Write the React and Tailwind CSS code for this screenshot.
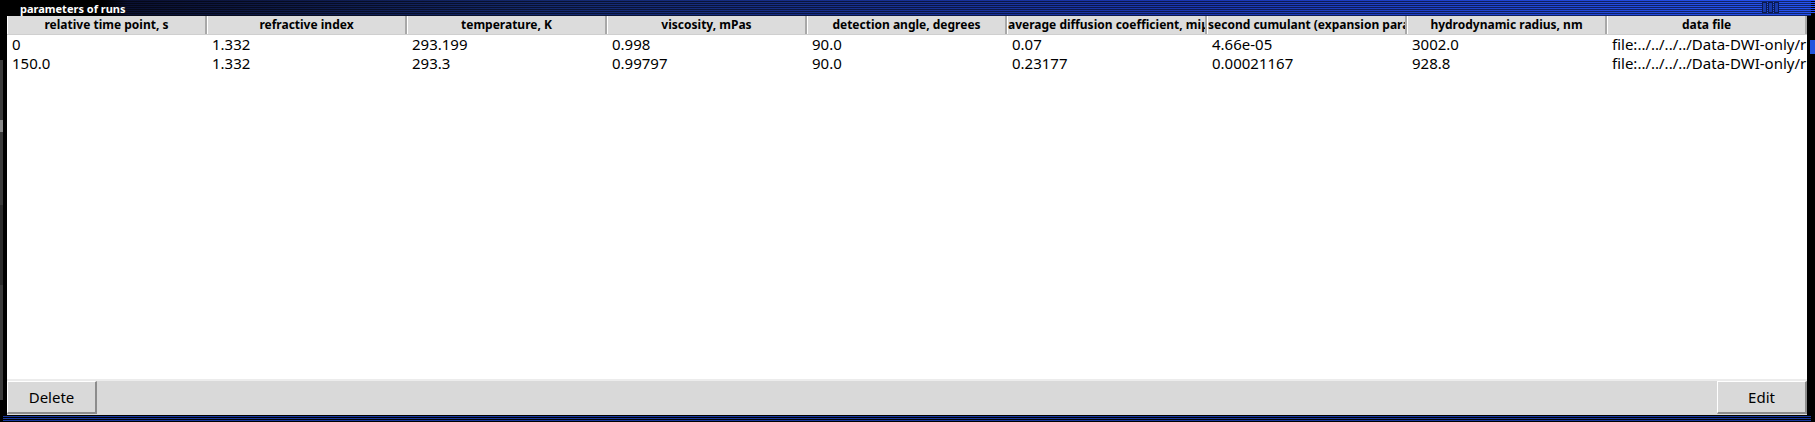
import React from "react";

const headers = [
  "relative time point, s",
  "refractive index",
  "temperature, K",
  "viscosity, mPas",
  "detection angle, degrees",
  "average diffusion coefficient, mi\u00b5m\u00b2/s",
  "second cumulant (expansion parameter)",
  "hydrodynamic radius, nm",
  "data file",
];

const rows = [
  ["0", "1.332", "293.199", "0.998", "90.0", "0.07", "4.66e-05", "3002.0", "file:../../../../Data-DWI-only/run1.dat"],
  ["150.0", "1.332", "293.3", "0.99797", "90.0", "0.23177", "0.00021167", "928.8", "file:../../../../Data-DWI-only/run2.dat"],
];

export default function App() {
  return (
    <div className="w-[1815px] h-[422px] bg-black overflow-hidden relative font-['Noto_Sans',sans-serif]">
      <div className="absolute left-0 top-[60px] w-[3px] h-[340px] bg-[#3a3a3a]" />
      <div className="absolute left-0 top-[120px] w-[3px] h-[12px] bg-[#888]" />
      <div className="absolute left-0 top-[205px] w-[3px] h-[80px] bg-[#2a2a2a]" />
      <div className="absolute right-0 top-0 w-[8px] h-[14px] [background:repeating-linear-gradient(to_bottom,#2a55ff_0px,#2a55ff_1px,#000_1px,#000_2px)]" />
      <div className="absolute right-0 top-[40px] w-[5px] h-[14px] bg-[#2255dd]" />
      <div className="flex flex-col w-[1808px] h-[422px] ml-[3px]">
        <div className="h-[16px] flex items-center relative [background:repeating-linear-gradient(to_bottom,rgba(0,0,0,0)_0px,rgba(0,0,0,0)_1px,rgba(0,0,0,0.55)_1px,rgba(0,0,0,0.55)_2px),linear-gradient(to_right,#000_0%,#0a1030_6%,#14296e_30%,#1a36b0_65%,#2552f0_100%)]">
          <div className="absolute left-0 top-0 h-full w-[125px] bg-[linear-gradient(to_right,#000_80%,rgba(0,0,0,0))]" />
          <span className="relative ml-[17px] text-white text-[11px] font-bold leading-none">parameters of runs</span>
          <div className="absolute right-[32px] top-[2px] flex gap-[1px]">
            <div className="w-[5px] h-[11px] bg-[#183aa8] border border-[#0a1a50]" />
            <div className="w-[5px] h-[11px] bg-[#183aa8] border border-[#0a1a50]" />
            <div className="w-[5px] h-[11px] bg-[#183aa8] border border-[#0a1a50]" />
          </div>
        </div>
        <div className="flex-1 flex flex-col ml-[4px] w-[1800px] bg-white">
          <div className="flex-1 flex flex-col overflow-hidden">
            <div className="flex h-[19px] bg-[#dcdcdc] border-b border-[#cfcfcf]">
              {headers.map((h, i) => (
                <div
                  key={i}
                  className="w-[200px] shrink-0 overflow-hidden whitespace-nowrap text-center text-[12px] font-bold leading-[18px] text-black border-r-2 border-r-[#a8a8a8] border-l border-l-white"
                >
                  {h}
                </div>
              ))}
            </div>
            {rows.map((r, ri) => (
              <div key={ri} className="flex h-[19px]">
                {r.map((c, ci) => (
                  <div
                    key={ci}
                    className="w-[200px] shrink-0 overflow-hidden whitespace-nowrap pl-[5px] text-[15px] leading-[19px] text-black"
                  >
                    {c}
                  </div>
                ))}
              </div>
            ))}
          </div>
          <div className="h-[36px] bg-[#d9d9d9] border-t-2 border-t-[#ececec] flex justify-between items-stretch pb-[1px]">
            <button className="w-[90px] bg-[#d9d9d9] border-r-2 border-b-2 border-r-[#8c8c8c] border-b-[#8c8c8c] border-l border-t border-white text-[15px] text-black">
              Delete
            </button>
            <button className="w-[90px] bg-[#d9d9d9] border-r-2 border-b-2 border-r-[#8c8c8c] border-b-[#8c8c8c] border-l border-t border-white text-[15px] text-black">
              Edit
            </button>
          </div>
        </div>
        <div className="h-[7px] [background:repeating-linear-gradient(to_bottom,#000_0px,#000_1px,#1a3aa0_1px,#1a3aa0_2px)]" />
      </div>
    </div>
  );
}
